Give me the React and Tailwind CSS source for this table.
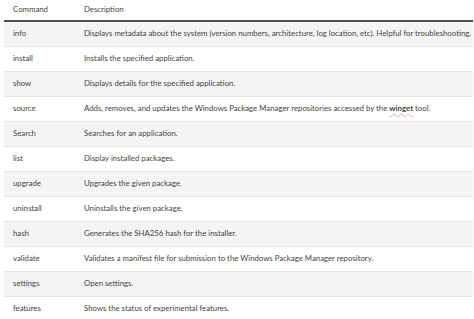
import React from 'react';

const rows = [
    ['info', 'Displays metadata about the system (version numbers, architecture, log location, etc). Helpful for troubleshooting.'],
    ['install', 'Installs the specified application.'],
    ['show', 'Displays details for the specified application.'],
    ['source', null],
    ['Search', 'Searches for an application.'],
    ['list', 'Display installed packages.'],
    ['upgrade', 'Upgrades the given package.'],
    ['uninstall', 'Uninstalls the given package.'],
    ['hash', 'Generates the SHA256 hash for the installer.'],
    ['validate', 'Validates a manifest file for submission to the Windows Package Manager repository.'],
    ['settings', 'Open settings.'],
    ['features', 'Shows the status of experimental features.'],
];

const App = () => {
    return (
        <div className="w-[474px] h-[319px] overflow-hidden bg-white pl-[4px] pr-[1px] font-['Lato',sans-serif] text-[7.8px] text-[#444]">
            <table className="w-full table-fixed border-collapse">
                <colgroup>
                    <col className="w-[80px]" />
                    <col />
                </colgroup>
                <thead>
                    <tr className="border-b-2 border-[#4f4f4f]">
                        <th className="h-[21px] pl-[9px] text-left font-normal">Command</th>
                        <th className="text-left font-normal">Description</th>
                    </tr>
                </thead>
                <tbody>
                    {rows.map(([cmd, desc], i) => (
                        <tr key={cmd} className={`h-[25px] border-b border-[#e6e6e6] ${i % 2 === 0 ? 'bg-[#f4f4f4]' : 'bg-white'}`}>
                            <td className="pl-[9px]">{cmd}</td>
                            <td className="whitespace-nowrap">
                                {desc ?? (
                                    <>
                                        Adds, removes, and updates the Windows Package Manager repositories accessed by the{' '}
                                        <span className="font-bold underline decoration-wavy decoration-1 decoration-[#dcaab2] underline-offset-2">winget</span> tool.
                                    </>
                                )}
                            </td>
                        </tr>
                    ))}
                </tbody>
            </table>
        </div>
    );
};

export default App;
